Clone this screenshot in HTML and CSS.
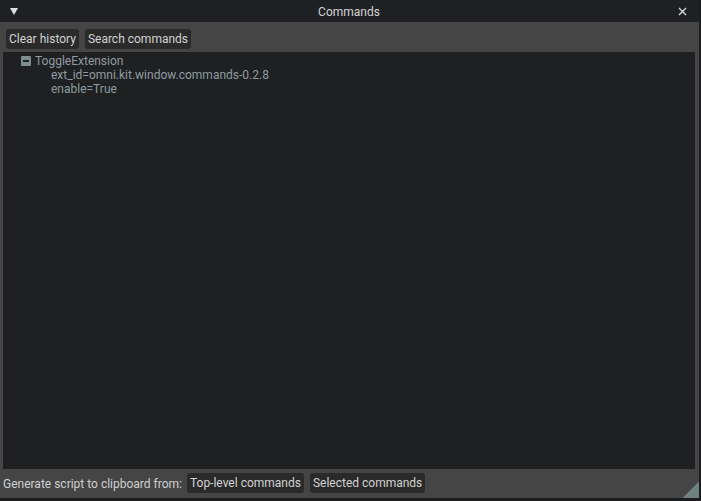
FILE: index.html
```html
<!DOCTYPE html>
<html lang="en">
<head>
  <meta charset="UTF-8" />
  <title>Commands</title>
  <link rel="stylesheet" href="styles.css">
</head>
<body>
  <div class="window">
    <div class="titlebar">
      <span class="collapse"></span>
      <span class="title">Commands</span>
      <svg class="close" width="9" height="9" viewBox="0 0 9 9">
        <path d="M1 1 L8 8 M8 1 L1 8" stroke="#d8d8d8" stroke-width="1.4" />
      </svg>
    </div>

    <div class="toolbar">
      <button class="btn">Clear history</button>
      <button class="btn">Search commands</button>
    </div>

    <div class="tree">
      <div class="node">
        <span class="minus"></span>
        <span>ToggleExtension</span>
      </div>
      <div class="arg">ext_id=omni.kit.window.commands-0.2.8</div>
      <div class="arg">enable=True</div>
    </div>

    <div class="footer">
      <span class="label">Generate script to clipboard from:</span>
      <button class="btn">Top-level commands</button>
      <button class="btn">Selected commands</button>
    </div>

    <span class="grip"></span>
  </div>
</body>
</html>
```

FILE: styles.css
```css
body {
  margin: 0;
  background: #1b1c1e;
  font-family: Roboto, "Liberation Sans", sans-serif;
  font-size: 12px;
}

.window {
  position: relative;
  width: 699px;
  height: 498px;
  background: #454545;
  display: flex;
  flex-direction: column;
}

/* barra de título */
.titlebar {
  height: 22px;
  box-sizing: border-box;
  background: #1f2023;
  display: flex;
  align-items: center;
  justify-content: space-between;
  padding: 1px 12px 0 10px;
  color: #d4d4d4;
}

.collapse {
  width: 0;
  height: 0;
  margin-top: -1px;
  border-left: 4px solid transparent;
  border-right: 4px solid transparent;
  border-top: 7px solid #e0e0e0;
}

.title {
  font-size: 12px;
  margin-left: 2px;
  padding-top: 1px;
}

.close {
  margin-top: -1px;
}

.toolbar {
  display: flex;
  gap: 6px;
  padding: 7px 6px 3px;
}

.btn {
  height: 20px;
  padding: 1px 3px 0;
  background: #2a2a2a;
  color: #d2d2d2;
  border: none;
  border-radius: 3px;
  font-family: inherit;
  font-size: 12px;
  line-height: 19px;
}

.tree {
  flex: 1;
  margin: 0 4px 0 3px;
  background: #1f2022;
  color: #8e9ca1;
  padding-top: 2px;
}

.node {
  display: flex;
  align-items: center;
  gap: 4px;
  padding-left: 18px;
  height: 14px;
}

.minus {
  position: relative;
  width: 10px;
  height: 10px;
  background: #7f8c90;
  border-radius: 1px;
}

.minus::after {
  content: "";
  position: absolute;
  left: 2px;
  top: 4px;
  width: 6px;
  height: 2px;
  background: #1f2022;
}

.arg {
  padding-left: 48px;
  height: 14px;
  line-height: 14px;
}

.footer {
  display: flex;
  align-items: center;
  gap: 6px;
  padding: 4px 3px 5px;
}

.label {
  color: #d0d0d0;
  margin-right: -1px;
  padding-top: 1px;
}

.grip {
  position: absolute;
  right: 0;
  bottom: 0;
  width: 17px;
  height: 16px;
  background: linear-gradient(to top left, #6f8081 50%, transparent 50%);
}
```
